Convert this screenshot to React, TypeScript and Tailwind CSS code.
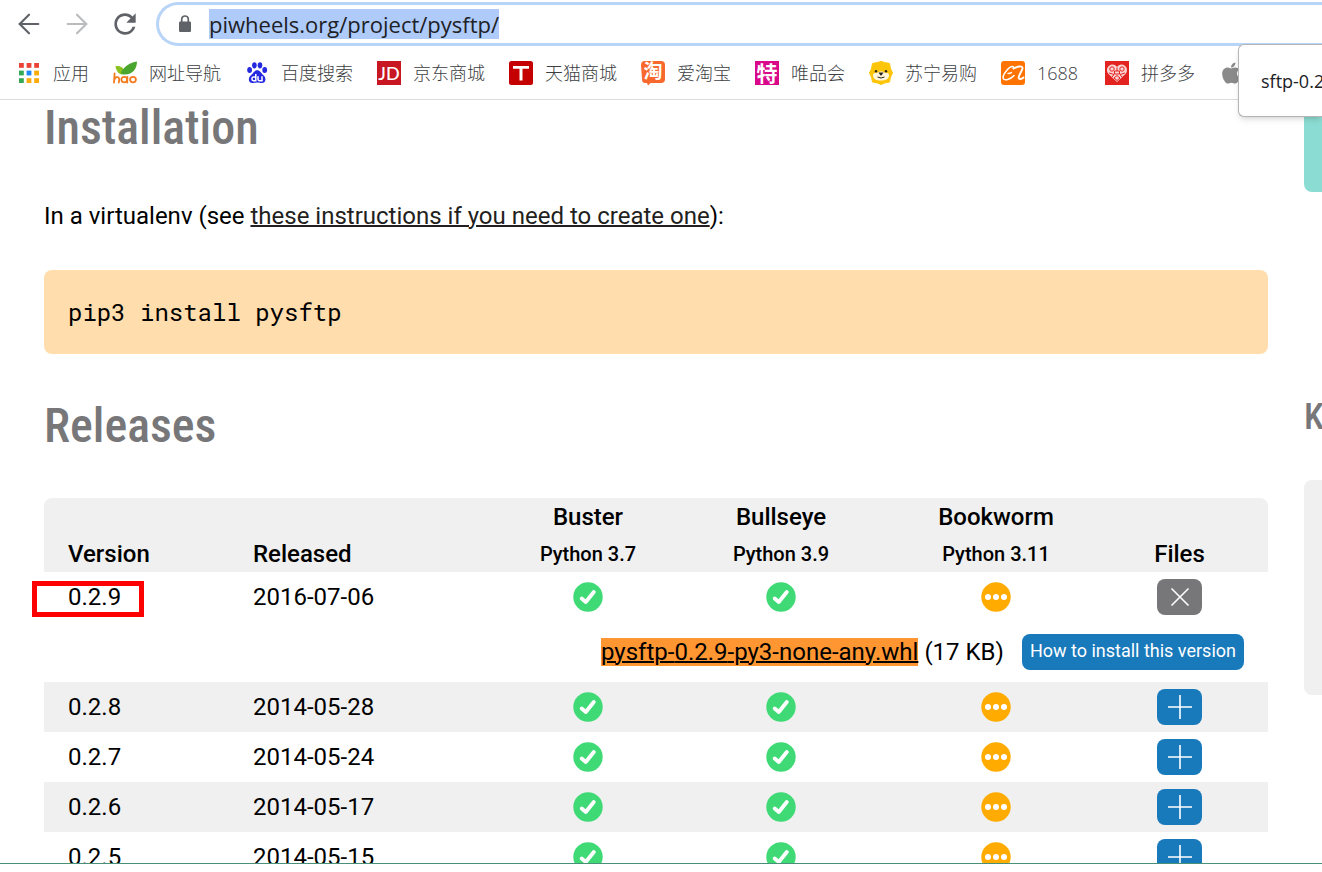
import { useState, type ReactNode } from "react";
import { ArrowLeft, ArrowRight } from "lucide-react";
import { FaApple } from "react-icons/fa";
import { MdRefresh } from "react-icons/md";

const UI_FONT = "font-['Segoe_UI','Open_Sans','Noto_Sans_CJK_SC',sans-serif]";
const HEADING = "font-['Roboto_Condensed','Liberation_Sans_Narrow',sans-serif] font-medium text-[#77777a]";

function LockIcon() {
  return (
    <svg viewBox="0 0 20 20" className="size-5" aria-hidden="true">
      <rect x="4" y="7.500" width="12" height="10.500" rx="1.300" fill="#5f6368" />
      <path d="M6.700 8V5.300A3.300 3.300 0 0 1 13.300 5.300V8" fill="none" stroke="#5f6368" strokeWidth="1.700" />
    </svg>
  );
}

function AppsIcon() {
  const colors = ["#ea4335", "#ea4335", "#ea4335", "#34a853", "#1e88f5", "#fbab0a", "#34a853", "#fbab0a", "#fbab0a"];
  return (
    <svg viewBox="0 0 20 20" className="mx-0.5 size-5" aria-hidden="true">
      {colors.map((c, i) => (
        <rect key={i} x={(i % 3) * 7.6} y={Math.floor(i / 3) * 7.6} width="4.8" height="4.8" fill={c} />
      ))}
    </svg>
  );
}

function HaoIcon() {
  return (
    <svg viewBox="0 0 24 24" className="size-6" aria-hidden="true">
      <path d="M2.5 5C7 4.500 10.500 6.500 11.500 10L9 13.500C5 13 3 9 2.500 5Z" fill="#8cc220" />
      <path d="M24 0.500C24 8 19 14.500 10 13.500C9 13 8 12 7.800 11.400C11.500 5 17 1.500 24 0.500Z" fill="#4aa52e" />
      <g fill="none" stroke="#f47b20" strokeWidth="1.800" strokeLinecap="round">
        <path d="M1.600 12.500L1 21.500M1.300 19C1.800 15.500 6.500 15 6.200 18.500L5.900 21.500" />
        <ellipse cx="11.300" cy="18.600" rx="2.900" ry="2.800" />
        <path d="M14.400 15.800L14.200 21.500" />
        <ellipse cx="20" cy="18.600" rx="2.900" ry="2.800" />
      </g>
    </svg>
  );
}

function BaiduIcon() {
  return (
    <svg viewBox="0 0 24 24" className="size-6" aria-hidden="true">
      <g fill="#2529e0">
        <ellipse cx="4.600" cy="9" rx="2.400" ry="2.900" />
        <ellipse cx="9.400" cy="4.300" rx="2.300" ry="3.100" />
        <ellipse cx="15" cy="4.300" rx="2.300" ry="3.100" />
        <ellipse cx="19.700" cy="9" rx="2.400" ry="2.900" />
        <path d="M12.200 9.300C15 9.300 15.800 12 18.200 14C21.500 16.500 21.200 22 17 22C15 22 14 21.500 12.200 21.500S9.500 22 7.400 22C3 22 2.800 16.500 6.200 14C8.500 12 9.400 9.300 12.200 9.300Z" />
      </g>
      <g fill="none" stroke="#fff" strokeWidth="1.500">
        <path d="M10.800 13V19.700H8.400C6.400 19.700 6.400 16 8.400 16H10.800" />
        <path d="M13 15.200V18.300Q13 19.700 14.500 19.700H17V15.200" />
      </g>
    </svg>
  );
}

function JdIcon() {
  return (
    <span className="flex size-6 items-center justify-center bg-[#c81623] font-[Lato,sans-serif] text-lg font-medium leading-6 text-white">JD</span>
  );
}

function TmallIcon() {
  return (
    <svg viewBox="0 0 24 24" className="size-6" aria-hidden="true">
      <rect width="24" height="24" rx="2.500" fill="#c40000" />
      <path d="M4 5H20V7.800H13.500V19.500H10.500V7.800H4Z" fill="#fff" />
    </svg>
  );
}

function TaobaoIcon() {
  return (
    <svg viewBox="0 0 24 24" className="size-6 overflow-visible" aria-hidden="true">
      <path d="M4 0H20Q24 0 24 4V18Q24 22 20 22H9.500L7 24.500L6 22H4Q1 22 1 18L0 4Q0 0 4 0Z" fill="#f9682c" />
      <text x="12" y="17" textAnchor="middle" fontSize="19" fontWeight="700" fill="#fff" fontFamily="Noto Sans CJK SC">淘</text>
    </svg>
  );
}

function VipIcon() {
  return (
    <svg viewBox="0 0 24 24" className="size-6 overflow-visible" aria-hidden="true">
      <rect width="24" height="24" fill="#d9078a" />
      <text x="12" y="20" textAnchor="middle" fontSize="21" fontWeight="700" fill="#fff" fontFamily="Noto Sans CJK SC">特</text>
    </svg>
  );
}

function SuningIcon() {
  return (
    <svg viewBox="0 0 24 24" className="size-6" aria-hidden="true">
      <path
        d="M12 0.500L15.500 1.500L20.500 2.500L21.500 7.500L23.500 12L21.500 16L20.500 21L15.500 22L12 23.500L8.500 22L3.500 21L2.500 16L0.500 12L2.500 7.500L3.500 2.500L8.500 1.500Z"
        fill="#fdc50a" stroke="#fdc50a" strokeWidth="1" strokeLinejoin="round"
      />
      <path d="M4 14C4 11.500 7.500 12 9 11.500L10.500 10.500H13.500L15 11.500C16.500 12 20 11.500 20 14C20 18.500 16 19.500 12 19.500S4 18.500 4 14Z" fill="#fff6dc" />
      <circle cx="7" cy="10.300" r="1.200" fill="#2b2416" />
      <circle cx="17" cy="10.300" r="1.200" fill="#2b2416" />
      <path d="M9.500 11.500H14.500L12.500 14.500H11.500Z" fill="#2b2416" />
      <path d="M8.500 16Q12 18 15.500 16" fill="none" stroke="#2b2416" />
    </svg>
  );
}

function AlibabaIcon() {
  return (
    <svg viewBox="0 0 24 24" className="size-6" aria-hidden="true">
      <rect width="24" height="24" rx="3" fill="#ff7300" />
      <g fill="none" stroke="#fff" strokeLinecap="round" strokeLinejoin="round">
        <path d="M12.500 7.500C13.500 4.500 9.500 5 6.500 8.500C3.500 12 1.500 15.500 2.200 17.500C3.200 20 9.500 18.500 13 14.500" strokeWidth="1.600" />
        <path d="M7 12.500C9 12.500 10 12 10.500 11.500" strokeWidth="1.400" />
        <path d="M12.500 7.500C16 5.500 22 4 21.500 7.500C21 10.500 17.300 14 17.700 16.800C18 18.700 20.500 18.300 22.500 16.500" strokeWidth="1.900" />
      </g>
    </svg>
  );
}

function PddIcon() {
  return (
    <svg viewBox="0 0 24 24" className="size-6" aria-hidden="true">
      <rect width="24" height="24" fill="#e2231f" />
      <path d="M12 21L3.500 13C0 9 3 3.500 7.500 3.500C9.500 3.500 11 4.500 12 6C13 4.500 14.500 3.500 16.500 3.500C21 3.500 24 9 20.500 13Z" fill="#fbd5d3" />
      <g fill="none" stroke="#e2231f" strokeWidth="1">
        <circle cx="7" cy="8" r="2.200" />
        <circle cx="17" cy="8" r="2.200" />
        <path d="M9.500 10H14.500V13H9.500ZM12 6.500V10M4 12L9 13.500L7 16M20 12L15 13.500L17 16M9 17L12 14.500L15 17L12 19.500Z" />
      </g>
    </svg>
  );
}

const bookmarks: { label: string; icon: ReactNode }[] = [
  { label: "应用", icon: <AppsIcon /> },
  { label: "网址导航", icon: <HaoIcon /> },
  { label: "百度搜索", icon: <BaiduIcon /> },
  { label: "京东商城", icon: <JdIcon /> },
  { label: "天猫商城", icon: <TmallIcon /> },
  { label: "爱淘宝", icon: <TaobaoIcon /> },
  { label: "唯品会", icon: <VipIcon /> },
  { label: "苏宁易购", icon: <SuningIcon /> },
  { label: "1688", icon: <AlibabaIcon /> },
  { label: "拼多多", icon: <PddIcon /> },
];

function CheckBadge() {
  return (
    <svg viewBox="0 0 30 30" className="mx-auto size-[30px]" role="img" aria-label="Success">
      <circle cx="15" cy="15" r="14.700" fill="#3fda76" />
      <path d="M8.700 16.500L12.800 20L20.800 10" fill="none" stroke="#fff" strokeWidth="3.800" strokeLinecap="round" strokeLinejoin="round" />
    </svg>
  );
}

function PendingBadge() {
  return (
    <svg viewBox="0 0 30 30" className="mx-auto size-[30px]" role="img" aria-label="Pending">
      <circle cx="15" cy="15" r="14.700" fill="#ffab00" />
      <g fill="#fff">
        <circle cx="7" cy="15" r="3" />
        <circle cx="15" cy="15" r="3" />
        <circle cx="23" cy="15" r="3" />
      </g>
    </svg>
  );
}

const releases = [
  { version: "0.2.9", date: "2016-07-06" },
  { version: "0.2.8", date: "2014-05-28" },
  { version: "0.2.7", date: "2014-05-24" },
  { version: "0.2.6", date: "2014-05-17" },
  { version: "0.2.5", date: "2014-05-15" },
];

function ReleaseRow({ version, date, shaded, marked, open, onToggle }: {
  version: string; date: string; shaded: boolean; marked: boolean; open: boolean; onToggle: () => void;
}) {
  return (
    <tr className={shaded ? "h-[50px] bg-[#f0f0f0]" : "h-[50px]"}>
      <td className="relative pl-6">
        {version}
        {marked && <span className="absolute -left-3 top-[9px] h-9 w-28 border-[5px] border-[#f00]" />}
      </td>
      <td className="pl-6">{date}</td>
      <td><CheckBadge /></td>
      <td><CheckBadge /></td>
      <td><PendingBadge /></td>
      <td className="pr-6">
        <button
          type="button"
          aria-label={`${open ? "Hide" : "Show"} files for ${version}`}
          onClick={onToggle}
          className={`mx-auto flex h-9 w-[45px] items-center justify-center rounded-lg ${open ? "bg-[#77777a]" : "bg-[#1879bb]"}`}
        >
          <svg viewBox="0 0 24 24" className="size-6" fill="none" stroke="#fff" strokeWidth="1.600" aria-hidden="true">
            {open ? <path d="M3.500 3.500L20.500 20.500M20.500 3.500L3.500 20.500" /> : <path d="M12 0V24M0 12H24" />}
          </svg>
        </button>
      </td>
    </tr>
  );
}

function ReleasesTable() {
  const [openVersion, setOpenVersion] = useState<string | null>("0.2.9");
  const rows = releases.flatMap((r, i) => {
    const open = r.version === openVersion;
    const row = (
      <ReleaseRow
        key={r.version}
        {...r}
        shaded={i % 2 === 1}
        marked={i === 0}
        open={open}
        onToggle={() => setOpenVersion(open ? null : r.version)}
      />
    );
    if (!open) return [row];
    return [
      row,
      <tr key={`${r.version}-files`} className="h-[60px]">
        <td colSpan={6} className="pr-6">
          <div className="flex items-center justify-end">
            <a href="#wheel" className="bg-[#ff9632] leading-7 underline decoration-2">pysftp-{r.version}-py3-none-any.whl</a>
            <span className="ml-1.5 mr-[18px]">(17 KB)</span>
            <button type="button" className="h-9 rounded-lg bg-[#1879bb] px-2 pb-0.5 text-lg leading-8 text-white">
              How to install this version
            </button>
          </div>
        </td>
      </tr>,
    ];
  });
  return (
    <table className="w-full table-fixed border-separate border-spacing-0">
      <colgroup>
        <col className="w-[185px]" />
        <col className="w-[262px]" />
        <col className="w-[194px]" />
        <col className="w-[192px]" />
        <col className="w-[238px]" />
        <col className="w-[153px]" />
      </colgroup>
      <thead>
        <tr className="h-[74px] align-bottom leading-9 [&>th]:bg-[#f0f0f0] [&>th]:font-medium">
          <th className="rounded-tl-lg pl-6 text-left">Version</th>
          <th className="pl-6 text-left">Released</th>
          <th>Buster<br /><span className="text-xl leading-9">Python 3.7</span></th>
          <th>Bullseye<br /><span className="text-xl leading-9">Python 3.9</span></th>
          <th>Bookworm<br /><span className="text-xl leading-9">Python 3.11</span></th>
          <th className="rounded-tr-lg pr-6">Files</th>
        </tr>
      </thead>
      <tbody>{rows}</tbody>
    </table>
  );
}

export default function App() {
  return (
    <div className="relative flex h-screen flex-col overflow-hidden bg-white font-[Roboto,sans-serif] text-2xl text-black">
      <header className={`shrink-0 border-b border-[#dadce0] ${UI_FONT}`}>
        <div className="flex items-center overflow-hidden pt-0.5">
          <nav className="flex w-[156px] shrink-0 items-center gap-4 pl-[13px]" aria-label="Browser">
            <button type="button" aria-label="Back" className="text-[#5f6368]"><ArrowLeft className="size-8" strokeWidth={1.6} /></button>
            <button type="button" aria-label="Forward" className="text-[#babcbe]"><ArrowRight className="size-8" strokeWidth={1.6} /></button>
            <button type="button" aria-label="Reload" className="text-[#5f6368]"><MdRefresh className="size-8" /></button>
          </nav>
          <div className="flex h-11 grow items-center gap-3.5 rounded-l-full border-[3px] border-r-0 border-[#b8d4f7] pl-4">
            <LockIcon />
            <input
              aria-label="Address"
              defaultValue="piwheels.org/project/pysftp/"
              className="field-sizing-content h-[30px] bg-[#aecbfa] text-[22px] text-[#202124] outline-none"
            />
          </div>
        </div>
        <div className="flex h-[53px] items-center gap-6 overflow-hidden pl-[17px]">
          {bookmarks.map((b) => (
            <a key={b.label} href="#bookmark" className="flex shrink-0 items-center gap-3 text-lg font-light leading-7 text-[#3c4043]">
              {b.icon}
              <span className={b.label === "1688" ? "w-11" : ""}>{b.label}</span>
            </a>
          ))}
          <a href="#bookmark" aria-label="Apple" className="shrink-0"><FaApple className="size-6 text-[#8a8a8a]" /></a>
        </div>
      </header>

      <div className={`absolute right-0 top-11 flex h-[73px] w-[84px] items-center overflow-hidden rounded-l-md border border-r-0 border-[#b5b5b5] bg-white pl-[22px] shadow-md ${UI_FONT}`}>
        <input aria-label="Find in page" defaultValue="sftp-0.2" className="w-24 shrink-0 text-lg text-[#202124] outline-none" />
      </div>

      <div className="flex min-h-0 grow gap-9 overflow-hidden border-b border-[#4a9078] pl-11">
        <main className="min-w-0 grow">
          <h2 className={`text-5xl leading-14 ${HEADING}`}>Installation</h2>
          <p className="mt-[42px] leading-9">
            In a virtualenv (see{" "}
            <a href="#instructions" className="text-[#231f20] underline decoration-2">these instructions if you need to create one</a>):
          </p>
          <pre className="mt-9 rounded-lg bg-[#ffddad] px-6 py-6 font-['Roboto_Mono','Liberation_Mono',monospace] leading-9">pip3 install pysftp</pre>
          <h2 className={`mb-11 mt-11 text-5xl leading-14 ${HEADING}`}>Releases</h2>
          <ReleasesTable />
        </main>
        <aside className="w-[18px] shrink-0 overflow-hidden">
          <div className="h-[92px] rounded-bl-lg bg-[#8bdcd2]" />
          <h3 className={`mt-[203px] text-4xl leading-[44px] ${HEADING}`}>K</h3>
          <div className="mt-[41px] h-[215px] rounded-l-lg bg-[#f0f0f0]" />
        </aside>
      </div>
      <footer className="h-2 shrink-0" />
    </div>
  );
}
